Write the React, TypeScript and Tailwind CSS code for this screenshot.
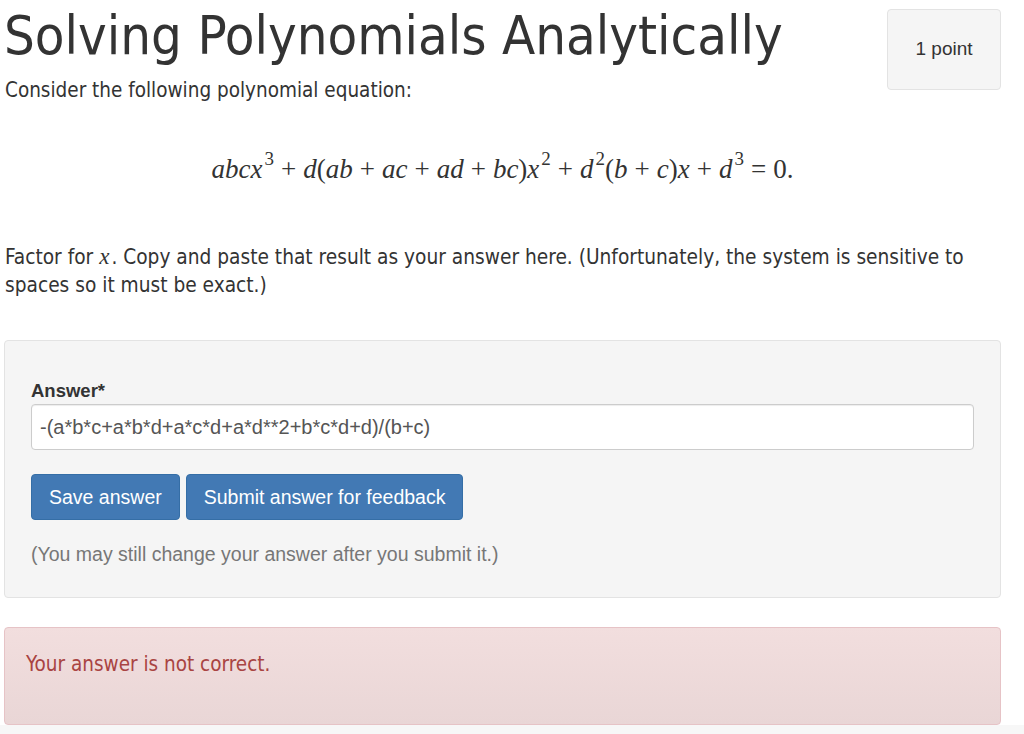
import React from "react";

const body = { fontFamily: '"DejaVu Sans Condensed", "DejaVu Sans", sans-serif' };
const helv = { fontFamily: '"Liberation Sans", Arial, sans-serif' };
const serif = { fontFamily: '"Liberation Serif", "Times New Roman", serif' };

function Op({ c }: { c: string }) {
  return <span className="mx-[7px]">{c}</span>;
}

function Sup({ n }: { n: string }) {
  return <sup className="text-[19px] top-[-0.65em] ml-[2px]">{n}</sup>;
}

function Equation() {
  return (
    <div className="flex justify-center text-[27px] text-[#333]" style={serif}>
      <span className="whitespace-nowrap">
        <i>abcx</i>
        <Sup n="3" />
        <Op c="+" />
        <i>d</i>(<i>ab</i>
        <Op c="+" />
        <i>ac</i>
        <Op c="+" />
        <i>ad</i>
        <Op c="+" />
        <i>bc</i>)<i>x</i>
        <Sup n="2" />
        <Op c="+" />
        <i>d</i>
        <Sup n="2" />(<i>b</i>
        <Op c="+" />
        <i>c</i>)<i>x</i>
        <Op c="+" />
        <i>d</i>
        <Sup n="3" />
        <Op c="=" />
        0.
      </span>
    </div>
  );
}

export default function App() {
  return (
    <div className="min-h-[734px] bg-white text-[#333]" style={body}>
      <div className="pl-[4px] pr-[23px]">
        <div className="flex justify-between items-start pt-[9px]">
          <div>
            <h1 className="text-[54px] leading-[54px] text-[#333]">Solving Polynomials Analytically</h1>
            <p className="text-[20.5px] mt-[12px] ml-[1px]">Consider the following polynomial equation:</p>
          </div>
          <div
            className="w-[114px] h-[81px] flex items-center justify-center bg-[#f5f5f5] border border-[#e3e3e3] rounded-[4px] text-[19px] text-[#333]"
            style={helv}
          >
            1 point
          </div>
        </div>

        <div className="mt-[43px]">
          <Equation />
        </div>

        <p className="text-[20.7px] leading-[28px] mt-[54px] ml-[1px] max-w-[975px]">
          Factor for{" "}
          <span style={serif} className="inline-block italic text-[23px] leading-none pr-[2px]">
            x
          </span>
          . Copy and paste that result as your answer here. (Unfortunately, the system is sensitive to spaces so it must be exact.)
        </p>

        <div className="mt-[41px] bg-[#f5f5f5] border border-[#e3e3e3] rounded-[4px] px-[26px] pt-[39px] pb-[27px]" style={helv}>
          <label className="block font-bold text-[18.5px] leading-[22px] mb-[2px]">Answer*</label>
          <div className="h-[46px] bg-white border border-[#ccc] rounded-[4px] flex items-center px-[8px] text-[20px] text-[#555] shadow-[inset_0_1px_1px_rgba(0,0,0,0.075)]">
            -(a*b*c+a*b*d+a*c*d+a*d**2+b*c*d+d)/(b+c)
          </div>
          <div className="flex gap-[6px] mt-[24px]">
            <button className="h-[46px] px-[17px] bg-[#4279b4] border border-[#356ea6] rounded-[4px] text-white text-[19.5px]">
              Save answer
            </button>
            <button className="h-[46px] px-[17px] bg-[#4279b4] border border-[#356ea6] rounded-[4px] text-white text-[19.5px]">
              Submit answer for feedback
            </button>
          </div>
          <p className="mt-[20px] text-[19.5px] text-[#777]">(You may still change your answer after you submit it.)</p>
        </div>

        <div className="mt-[29px] h-[98px] bg-gradient-to-b from-[#f2dede] to-[#e9d6d6] border border-[#e6c3c6] rounded-[4px] px-[21px] pt-[21px] text-[#a94442] text-[20.5px]">
          Your answer is not correct.
        </div>
      </div>
      <div className="h-[10px] bg-[#f7f7f7]" />
    </div>
  );
}
